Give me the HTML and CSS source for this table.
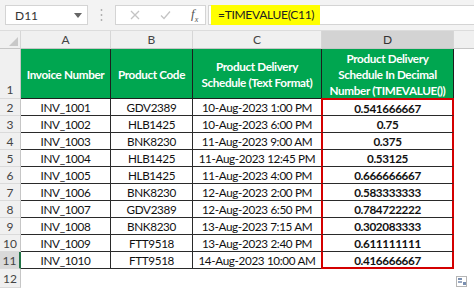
FILE: index.html
```html
<!DOCTYPE html>
<html>
<head>
<meta charset="utf-8">
<link rel="stylesheet" href="styles.css">
</head>
<body>
<div class="fbar">
  <div class="namebox"><span>D11</span><svg class="dd" width="8" height="5" viewBox="0 0 8 5"><path d="M0 0h8L4 5z" fill="#666"/></svg></div>
  <div class="dots"><svg width="3" height="14" viewBox="0 0 3 14"><circle cx="1.5" cy="2" r="0.9" fill="#aaa"/><circle cx="1.5" cy="7" r="0.9" fill="#aaa"/><circle cx="1.5" cy="12" r="0.9" fill="#aaa"/></svg></div>
  <div class="fxbox">
    <svg width="10" height="10" viewBox="0 0 10 10"><path d="M1 1L9 9M9 1L1 9" stroke="#c4c4c4" stroke-width="1.3"/></svg>
    <svg width="11" height="10" viewBox="0 0 11 10"><path d="M1 5.5L4 8.5L10 1.5" stroke="#c4c4c4" stroke-width="1.3" fill="none"/></svg>
    <span class="fx"><i>f</i><sub>x</sub></span>
  </div>
  <div class="formula"><span class="hl">=TIMEVALUE(C11)</span></div>
</div>
<div class="sheet">
  <div class="ch corner"><svg width="9" height="9" viewBox="0 0 9 9"><path d="M9 0V9H0z" fill="#c8c8c8"/></svg></div>
  <div class="ch">A</div><div class="ch">B</div><div class="ch">C</div><div class="ch sel">D</div><div class="ch blank"></div>

  <div class="rn r1">1</div>
  <div class="g first">Invoice Number</div>
  <div class="g">Product Code</div>
  <div class="g">Product Delivery<br>Schedule (Text Format)</div>
  <div class="g">Product Delivery<br>Schedule In Decimal<br>Number (TIMEVALUE())</div>
  <div class="e"></div>

  <div class="rn">2</div><div class="c first">INV_1001</div><div class="c">GDV2389</div><div class="c">10-Aug-2023 1:00 PM</div><div class="c v top">0.541666667</div><div class="e"></div>
  <div class="rn">3</div><div class="c first">INV_1002</div><div class="c">HLB1425</div><div class="c">10-Aug-2023 6:00 PM</div><div class="c v">0.75</div><div class="e"></div>
  <div class="rn">4</div><div class="c first">INV_1003</div><div class="c">BNK8230</div><div class="c">11-Aug-2023 9:00 AM</div><div class="c v">0.375</div><div class="e"></div>
  <div class="rn">5</div><div class="c first">INV_1004</div><div class="c">HLB1425</div><div class="c">11-Aug-2023 12:45 PM</div><div class="c v">0.53125</div><div class="e"></div>
  <div class="rn">6</div><div class="c first">INV_1005</div><div class="c">HLB1425</div><div class="c">11-Aug-2023 4:00 PM</div><div class="c v">0.666666667</div><div class="e"></div>
  <div class="rn">7</div><div class="c first">INV_1006</div><div class="c">BNK8230</div><div class="c">12-Aug-2023 2:00 PM</div><div class="c v">0.583333333</div><div class="e"></div>
  <div class="rn">8</div><div class="c first">INV_1007</div><div class="c">GDV2389</div><div class="c">12-Aug-2023 6:50 PM</div><div class="c v">0.784722222</div><div class="e"></div>
  <div class="rn">9</div><div class="c first">INV_1008</div><div class="c">BNK8230</div><div class="c">13-Aug-2023 7:15 AM</div><div class="c v">0.302083333</div><div class="e"></div>
  <div class="rn">10</div><div class="c first">INV_1009</div><div class="c">FTT9518</div><div class="c">13-Aug-2023 2:40 PM</div><div class="c v">0.611111111</div><div class="e"></div>
  <div class="rn selr">11</div><div class="c first">INV_1010</div><div class="c">FTT9518</div><div class="c">14-Aug-2023 10:00 AM</div><div class="c v bot">0.416666667</div><div class="e"></div>

  <div class="rn">12</div><div class="e"></div><div class="e"></div><div class="e"></div><div class="e"></div>
  <div class="e qa"><svg width="11" height="11" viewBox="0 0 11 11"><rect x="0.5" y="0.5" width="10" height="10" fill="#fff" stroke="#b5b5b5"/><rect x="2" y="2" width="4" height="2" fill="#7a8fb0"/><rect x="2" y="5" width="4" height="2" fill="#9aa8c0"/><rect x="7" y="6" width="3" height="3" fill="#7a8fb0"/></svg></div>
</div>
</body>
</html>
```

FILE: styles.css
```css
html, body {
  margin: 0;
  padding: 0;
  background: #fff;
  font-family: Lato, "Open Sans", sans-serif;
}
.fbar {
  height: 31px;
  box-sizing: border-box;
  display: flex;
  align-items: center;
  background: #f3f3f3;
  border-bottom: 1px solid #dcdcdc;
}
.namebox {
  margin-left: 5px;
  width: 83px;
  height: 20px;
  box-sizing: border-box;
  background: #fff;
  border: 1px solid #d4d4d4;
  display: flex;
  align-items: center;
  justify-content: space-between;
  padding: 0 5px 0 9px;
  font-size: 12px;
  color: #333;
}
.dots {
  width: 27px;
  display: flex;
  justify-content: center;
}
.fxbox {
  width: 91px;
  height: 20px;
  box-sizing: border-box;
  background: #fff;
  border: 1px solid #d4d4d4;
  display: flex;
  align-items: center;
  gap: 20px;
  padding-left: 14px;
}
.fx {
  font-family: "Liberation Serif", serif;
  font-size: 13px;
  color: #555;
}
.fx sub { font-size: 8px; font-style: italic; }
.formula {
  flex: 1;
  height: 20px;
  box-sizing: border-box;
  background: #fff;
  border: 1px solid #d4d4d4;
  border-right: none;
  margin-left: 2px;
  display: flex;
  align-items: center;
  padding-left: 2px;
}
.hl {
  background: #ffff00;
  height: 20px;
  line-height: 20px;
  padding: 0 6px 0 7px;
  font-size: 12px;
  letter-spacing: -0.3px;
  color: #222;
}
.sheet {
  display: grid;
  grid-template-columns: 21px 90px 82px 129px 132px 1fr;
  grid-template-rows: 18px 50px repeat(10, 17px) 19px;
  font-size: 11.7px;
  letter-spacing: -0.35px;
}
.sheet > div {
  box-sizing: border-box;
  display: flex;
  align-items: center;
  justify-content: center;
  text-align: center;
  white-space: nowrap;
  overflow: hidden;
}
.ch {
  background: #f0f0f0;
  color: #444;
  font-size: 12px;
  letter-spacing: 0;
  border-right: 1px solid #d6d6d6;
  border-bottom: 1px solid #c6c6c6;
}
.ch.sel { background: #d3d3d3; color: #333; }
.ch.blank { border-right: none; }
.sheet > .corner {
  justify-content: flex-end;
  align-items: flex-end;
  padding: 0 2px 2px 0;
}
.rn {
  background: #f0f0f0;
  color: #444;
  font-size: 12px;
  letter-spacing: 0;
  border-right: 1px solid #c6c6c6;
  border-bottom: 1px solid #dadada;
}
.sheet > .r1 { align-items: flex-end; padding-bottom: 1px; }
.rn.selr {
  background: #d9d9d9;
  border-right: 2px solid #217346;
}
.g {
  background: #00a650;
  color: #fff;
  font-weight: bold;
  line-height: 16px;
  border-right: 1px solid #1e1e1e;
  border-bottom: 1px solid #1e1e1e;
}
.c {
  color: #111;
  border-right: 1px solid #2a2a2a;
  border-bottom: 1px solid #2a2a2a;
}
.v {
  font-weight: bold;
  border-left: 2px solid #d40000;
  border-right: 2px solid #d40000;
  margin-left: -1px;
}
.v.top { border-top: 2px solid #d40000; margin-top: -1px; }
.v.bot { border-bottom: 2px solid #d40000; }
.e { background: #fff; }
.sheet > .qa {
  justify-content: flex-start;
  align-items: flex-start;
  padding: 7px 0 0 2px;
  overflow: visible;
}
.qa svg { display: block; }
```
